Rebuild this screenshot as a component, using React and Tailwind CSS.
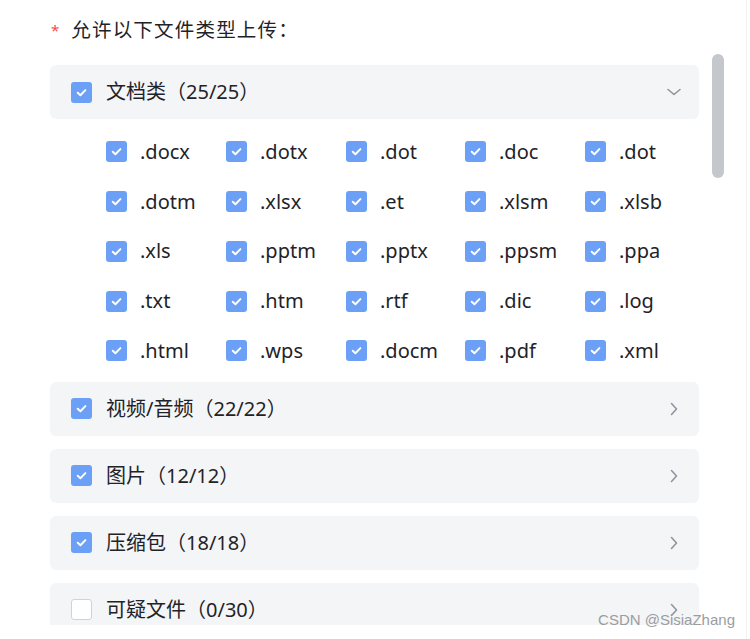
import React, { useState } from "react";

const font = { fontFamily: '"Noto Sans", "Noto Sans CJK SC", sans-serif' };

const docTypes = [
  ".docx", ".dotx", ".dot", ".doc", ".dot",
  ".dotm", ".xlsx", ".et", ".xlsm", ".xlsb",
  ".xls", ".pptm", ".pptx", ".ppsm", ".ppa",
  ".txt", ".htm", ".rtf", ".dic", ".log",
  ".html", ".wps", ".docm", ".pdf", ".xml",
];

const groups = [
  { name: "视频/音频（22/22）", checked: true },
  { name: "图片（12/12）", checked: true },
  { name: "压缩包（18/18）", checked: true },
  { name: "可疑文件（0/30）", checked: false },
];

const Checkbox = ({ checked }) =>
  checked ? (
    <span className="flex h-[21px] w-[21px] shrink-0 items-center justify-center rounded-[3px] bg-[#6ba0f6]">
      <svg width="13" height="13" viewBox="0 0 12 12" fill="none">
        <path d="M2.5 6.2 5 8.5 9.6 3.8" stroke="#fff" strokeWidth="1.8" strokeLinecap="round" strokeLinejoin="round" />
      </svg>
    </span>
  ) : (
    <span className="h-[21px] w-[21px] shrink-0 rounded-[3px] border border-[#d0d3d6] bg-white" />
  );

const ChevronRight = () => (
  <svg width="10" height="16" viewBox="0 0 10 16" fill="none">
    <path d="M2.5 2.5 7.5 8l-5 5.5" stroke="#8f959e" strokeWidth="1.6" strokeLinecap="round" strokeLinejoin="round" />
  </svg>
);

const ChevronDown = () => (
  <svg width="16" height="10" viewBox="0 0 16 10" fill="none">
    <path d="M2 2.5 8 7.5l6-5" stroke="#8f959e" strokeWidth="1.6" strokeLinecap="round" strokeLinejoin="round" />
  </svg>
);

const App = () => {
  const [open] = useState(true);

  return (
    <div className="relative h-[639px] w-[750px] overflow-hidden bg-white text-[#1f2329]" style={font}>
      <div className="flex h-[50px] items-center pl-[51px] pt-[10px]">
        <span className="mr-[12px] text-[15px] text-[#f54a45]">*</span>
        <span className="text-[19.5px] tracking-[1.2px]">允许以下文件类型上传：</span>
      </div>

      <div className="relative h-[575px] overflow-hidden pt-[15px]">
        <div className="ml-[50px] flex w-[649px] flex-col gap-[13px]">
          <div className="-mb-[7px]">
            <div className="flex h-[54px] items-center rounded-[6px] bg-[#f4f5f6] pl-[21px] pr-[17px]">
              <Checkbox checked />
              <span className="ml-[14px] flex-1 text-[20px]">文档类（25/25）</span>
              {open ? <ChevronDown /> : <ChevronRight />}
            </div>
            <div className="grid grid-cols-[120px_120px_119px_120px_100px] pl-[56px] pt-[8px]">
              {docTypes.map((t, i) => (
                <div key={i} className="flex h-[49.75px] items-center">
                  <Checkbox checked />
                  <span className="ml-[13px] text-[20px]">{t}</span>
                </div>
              ))}
            </div>
          </div>
          {groups.map((g) => (
            <div key={g.name} className="flex h-[54px] items-center rounded-[6px] bg-[#f4f5f6] pl-[21px] pr-[20px]">
              <Checkbox checked={g.checked} />
              <span className="ml-[14px] flex-1 text-[20px]">{g.name}</span>
              <ChevronRight />
            </div>
          ))}
        </div>
        <div className="absolute right-[26px] top-[4px] h-[124px] w-[12px] rounded-full bg-[#c4c7cc]" />
      </div>

      <div className="absolute bottom-[8px] right-[15px] text-[15px] text-[#9a9da2]" style={{ fontFamily: '"Liberation Sans", sans-serif' }}>
        CSDN @SisiaZhang
      </div>
      <div className="absolute right-[3px] top-0 h-full w-px bg-[#f0f0f0]" />
    </div>
  );
};

export default App;
